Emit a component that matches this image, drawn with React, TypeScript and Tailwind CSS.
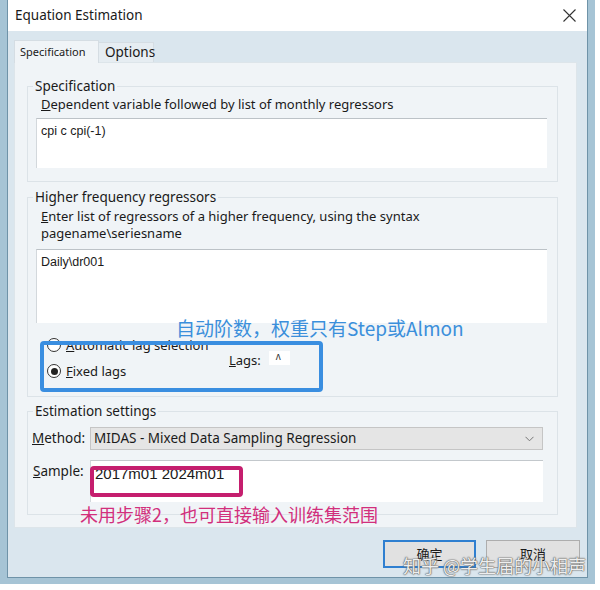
import React from "react";

const ui = "font-['Noto_Sans','Noto_Sans_CJK_SC',sans-serif]";
const arial = "font-['Liberation_Sans',Arial,sans-serif]";
const cjk = "font-['Noto_Sans_CJK_SC','Noto_Sans',sans-serif]";

function Radio({ checked, children }: { checked?: boolean; children: React.ReactNode }) {
  return (
    <div className="flex items-center h-[18px]">
      <span className="w-[14px] h-[14px] rounded-full border border-[#333] bg-white flex items-center justify-center">
        {checked && <span className="w-[7px] h-[7px] rounded-full bg-[#222]" />}
      </span>
      <span className="ml-[5px] text-[13px] text-[#1a1a1a] leading-[18px]">{children}</span>
    </div>
  );
}

export default function App() {
  return (
    <div className={`relative w-[600px] h-[590px] bg-white ${ui}`}>
      <div className="w-[595px] h-[584px] bg-[#a6c4d5] px-[7px] pb-[6px] flex">
        <div className="flex-1 flex flex-col border border-t-0 border-[#6f93a8]">
          {/* Title bar */}
          <div className="h-[31px] bg-white flex items-center justify-between pl-[7px] pr-[11px] shrink-0">
            <span className="text-[13.5px] text-[#1a1a1a]">Equation Estimation</span>
            <svg width="13" height="13" viewBox="0 0 13 13">
              <path d="M0.5 0.5 L12.5 12.5 M12.5 0.5 L0.5 12.5" stroke="#333" strokeWidth="1.1" />
            </svg>
          </div>
          {/* Body */}
          <div className="flex-1 bg-[#dae6ee] pl-[6px] pr-[7px] pt-[9px] flex flex-col">
            {/* Tabs */}
            <div className="flex items-end h-[22px] relative z-10">
              <div className="h-[23px] w-[85px] bg-[#f0f4f7] border border-b-0 border-[#d5dde3] flex items-center pl-[5px] text-[11px] text-[#1a1a1a] mb-[-1px]">
                Specification
              </div>
              <div className="h-[20px] w-[55px] bg-[#e6edf2] border border-b-0 border-l-0 border-[#d5dde3] flex items-center pl-[6px] text-[13.5px] text-[#1a1a1a]">
                Options
              </div>
            </div>
            {/* Panel */}
            <div className="h-[466px] mr-[3px] bg-[#f0f4f7] border border-[#dde5ea] pl-[12px] pr-[18px] pt-[14px] text-[#1a1a1a]">
              <fieldset className="border border-[#dce3e8] pl-[8px] pr-[10px] pb-[13px]">
                <legend className="ml-[-3px] px-[2px] text-[13.5px] leading-[18px]">Specification</legend>
                <div className="text-[13px] leading-[17px] pl-[5px] mt-[1px]">
                  <u>D</u>ependent variable followed by list of monthly regressors
                </div>
                <div className={`mt-[5px] h-[50px] bg-white border-t border-l border-t-[#bcc2c7] border-l-[#d3d8dc] pl-[4px] pt-[3px] text-[12.5px] ${arial}`}>
                  cpi c cpi(-1)
                </div>
              </fieldset>
              <fieldset className="mt-[6px] border border-[#dce3e8] pl-[8px] pr-[10px] pb-[16px]">
                <legend className="ml-[-3px] px-[2px] text-[13.5px] leading-[18px]">Higher frequency regressors</legend>
                <div className="text-[13px] leading-[17px] pl-[5px] mt-[2px]">
                  <u>E</u>nter list of regressors of a higher frequency, using the syntax
                  <br />
                  pagename\seriesname
                </div>
                <div className={`mt-[7px] h-[74px] bg-white border-t border-l border-t-[#bcc2c7] border-l-[#d3d8dc] pl-[4px] pt-[3px] text-[12.5px] ${arial}`}>
                  Daily\dr001
                </div>
                <div className="mt-[13px] flex items-center">
                  <div className="ml-[11px] w-[182px] flex flex-col gap-[8px]">
                    <Radio>
                      <u>A</u>utomatic lag selection
                    </Radio>
                    <Radio checked>
                      <u>F</u>ixed lags
                    </Radio>
                  </div>
                  <span className="text-[13px] leading-[17px] mt-[5px]">
                    <u>L</u>ags:
                  </span>
                  <div className={`ml-[8px] w-[21px] h-[14px] bg-white flex items-start pl-[7px] text-[10px] leading-[12px] text-[#333] ${arial}`}>
                    ʌ
                  </div>
                </div>
              </fieldset>
              <fieldset className="mt-[5px] border border-[#dce3e8] pl-[4px] pr-[14px] pb-[12px]">
                <legend className="ml-[1px] px-[2px] text-[13.5px] leading-[18px]">Estimation settings</legend>
                <div className="mt-[7px] flex items-center">
                  <span className="w-[58px] text-[13.5px]">
                    <u>M</u>ethod:
                  </span>
                  <div className="flex-1 h-[23px] bg-[#e5e5e5] border border-[#c5c5c5] flex items-center justify-between pl-[3px] pr-[8px] text-[13.5px]">
                    <span>MIDAS - Mixed Data Sampling Regression</span>
                    <svg width="9" height="6" viewBox="0 0 9 6">
                      <path d="M0.5 0.8 L4.5 4.8 L8.5 0.8" stroke="#777" strokeWidth="1" fill="none" />
                    </svg>
                  </div>
                </div>
                <div className="mt-[10px] flex items-start">
                  <span className="w-[58px] text-[13.5px] pl-[1px] mt-[1px]">
                    <u>S</u>ample:
                  </span>
                  <div className={`flex-1 h-[42px] bg-white border-t border-l border-t-[#c3c8cc] border-l-[#d3d8dc] pl-[4px] pt-[4px] text-[15px] leading-[18px] ${arial}`}>
                    2017m01 2024m01
                  </div>
                </div>
              </fieldset>
            </div>
            {/* Buttons */}
            <div className={`mt-[12px] flex justify-end gap-[10px] ${cjk}`}>
              <div className="w-[93px] h-[28px] bg-[#e1e1e1] border-2 border-[#2f7fd0] flex items-center justify-center text-[13px] text-[#1a1a1a]">
                确定
              </div>
              <div className="w-[94px] h-[28px] bg-[#e1e1e1] border border-[#adadad] flex items-center justify-center text-[13px] text-[#1a1a1a]">
                取消
              </div>
            </div>
          </div>
        </div>
      </div>

      {/* Annotations */}
      <div className="absolute left-[40px] top-[341px] w-[283px] h-[51px] border-4 border-[#3a8ee0] rounded-[4px]" />
      <div className={`absolute left-[176px] top-[316px] text-[19px] leading-[24px] text-[#3b8fdb] whitespace-nowrap ${cjk}`}>
        自动阶数，权重只有Step或Almon
      </div>
      <div className="absolute left-[90px] top-[466px] w-[153px] h-[31px] border-4 border-[#c51e6e] rounded-[4px]" />
      <div className={`absolute left-[80px] top-[502px] text-[18px] leading-[24px] text-[#d22f7c] whitespace-nowrap ${cjk}`}>
        未用步骤2，也可直接输入训练集范围
      </div>
      <div
        className={`absolute left-[403px] top-[553px] text-[18px] leading-[24px] text-white/90 whitespace-nowrap ${cjk} [text-shadow:0_0_1px_#555,0_0_1px_#555,0_0_2px_#777]`}
      >
        知乎 @学生届的小相声
      </div>
    </div>
  );
}
